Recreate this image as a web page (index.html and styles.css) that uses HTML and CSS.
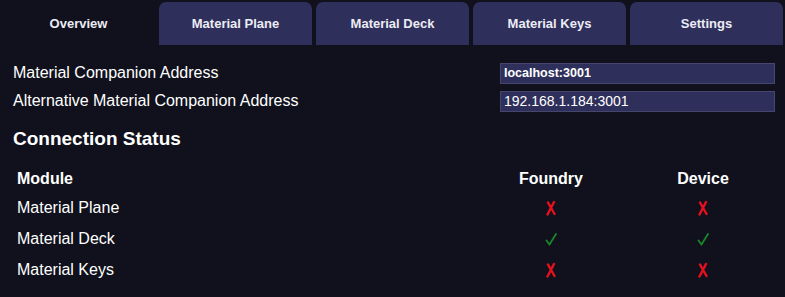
FILE: index.html
```html
<!DOCTYPE html>
<html lang="en">

<head>
	<meta charset="UTF-8">
	<title>Material Companion</title>
	<link rel="stylesheet" href="styles.css">
</head>

<body>
	<div class="tabs">
		<div class="tab active">Overview</div>
		<div class="tab">Material Plane</div>
		<div class="tab">Material Deck</div>
		<div class="tab">Material Keys</div>
		<div class="tab">Settings</div>
	</div>

	<div class="content">
		<div class="field">
			<label class="field-label">Material Companion Address</label>
			<input class="field-input bold" type="text" value="localhost:3001">
		</div>
		<div class="field">
			<label class="field-label">Alternative Material Companion Address</label>
			<input class="field-input" type="text" value="192.168.1.184:3001">
		</div>

		<h2 class="title">Connection Status</h2>

		<table class="status">
			<tr>
				<th class="col-module">Module</th>
				<th class="col-state">Foundry</th>
				<th class="col-state">Device</th>
			</tr>
			<tr>
				<td>Material Plane</td>
				<td class="mark"><svg class="no" viewBox="0 0 12 16"><path d="M3 2.5 L9.5 14 M9 2 L2.5 14.5" /></svg></td>
				<td class="mark"><svg class="no" viewBox="0 0 12 16"><path d="M3 2.5 L9.5 14 M9 2 L2.5 14.5" /></svg></td>
			</tr>
			<tr>
				<td>Material Deck</td>
				<td class="mark"><svg class="ok" viewBox="0 0 12 16"><path d="M1.5 9.5 L4.5 13.5 L11 3" /></svg></td>
				<td class="mark"><svg class="ok" viewBox="0 0 12 16"><path d="M1.5 9.5 L4.5 13.5 L11 3" /></svg></td>
			</tr>
			<tr>
				<td>Material Keys</td>
				<td class="mark"><svg class="no" viewBox="0 0 12 16"><path d="M3 2.5 L9.5 14 M9 2 L2.5 14.5" /></svg></td>
				<td class="mark"><svg class="no" viewBox="0 0 12 16"><path d="M3 2.5 L9.5 14 M9 2 L2.5 14.5" /></svg></td>
			</tr>
		</table>
	</div>
</body>

</html>
```

FILE: styles.css
```css
body {
	margin: 0;
	background: #10111c;
	color: #fff;
	font-family: "Liberation Sans", Arial, sans-serif;
}

.tabs {
	display: flex;
	gap: 4px;
	padding: 2px 2px 0 2px;
}

.tab {
	flex: 1;
	height: 43px;
	line-height: 44px;
	text-align: center;
	font-size: 13px;
	font-weight: bold;
	color: #ececf4;
	background: #2f2f5b;
	border-radius: 7px 7px 0 0;
}

.tab.active {
	background: transparent;
}

.content {
	padding: 14px 10px 0 13px;
}

.field {
	display: flex;
	justify-content: space-between;
	align-items: center;
	height: 28px;
}

.field-label {
	font-size: 16px;
}

.field-input {
	box-sizing: border-box;
	width: 275px;
	height: 21px;
	padding: 0 3px;
	background: #2f2f5b;
	border: 1px solid #46466c;
	color: #fff;
	font-family: "Liberation Sans", Arial, sans-serif;
	font-size: 14px;
	outline: none;
}

.field-input.bold {
	font-size: 12.5px;
	font-weight: bold;
}

.title {
	margin: 13px 0 0 0;
	font-size: 19px;
	line-height: 22px;
}

.status {
	width: 766px;
	margin-top: 16px;
	border-collapse: collapse;
	font-size: 16px;
}

.status th,
.status td {
	padding: 0 4px;
	height: 31px;
}

.status th {
	height: 26px;
	text-align: center;
}

.status th.col-module {
	text-align: left;
}

.col-state {
	width: 144px;
}

.mark {
	text-align: center;
}

.mark svg {
	display: inline-block;
	vertical-align: middle;
	width: 12px;
	height: 16px;
	fill: none;
	stroke-linecap: round;
}

.mark svg.no {
	stroke: #e8101c;
	stroke-width: 2.4;
}

.mark svg.ok {
	stroke: #1a8a28;
	stroke-width: 1.7;
}
```
